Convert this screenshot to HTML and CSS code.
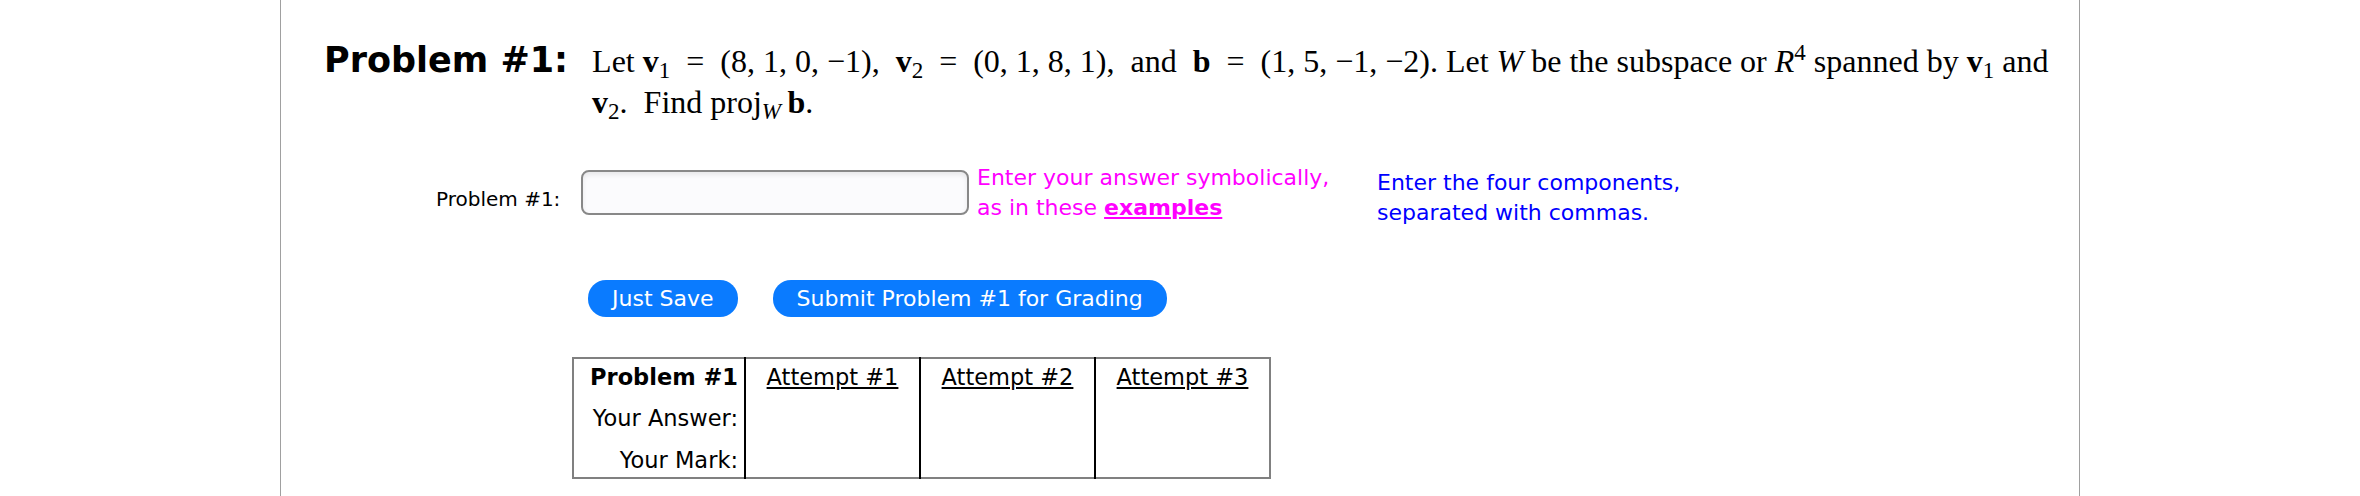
FILE: index.html
```html
<!DOCTYPE html>
<html lang="en">

<head>
  <meta charset="UTF-8" />
  <title>Problem #1</title>
  <link rel="stylesheet" href="styles.css">
</head>

<body>
  <div class="page">
    <div class="problem">
      <div class="problem-title">Problem #1:</div>
      <div class="problem-text">
        Let <b>v</b><span class="sub">1</span>&nbsp; = &nbsp;(8, 1, 0, −1), &nbsp;<b>v</b><span class="sub">2</span>&nbsp; = &nbsp;(0, 1, 8, 1), &nbsp;and &nbsp;<b>b</b>&nbsp; = &nbsp;(1, 5, −1, −2). Let <i>W</i> be the subspace or <i>R</i><span class="sup">4</span> spanned by <b>v</b><span class="sub">1</span> and<br>
        <b>v</b><span class="sub">2</span>. &nbsp;Find proj<span class="sub"><i>W</i></span>&thinsp;<b>b</b>.
      </div>
    </div>

    <div class="answer-row">
      <label class="answer-label" for="ans1">Problem #1:</label>
      <input class="answer-input" id="ans1" type="text">
      <div class="hint-pink">Enter your answer symbolically,<br>as in these <a href="#">examples</a></div>
      <div class="hint-blue">Enter the four components,<br>separated with commas.</div>
    </div>

    <div class="buttons">
      <button class="btn">Just Save</button>
      <button class="btn">Submit Problem #1 for Grading</button>
    </div>

    <table class="attempts">
      <tr class="head-row">
        <th class="row-head">Problem #1</th>
        <td class="attempt"><u>Attempt #1</u></td>
        <td class="attempt"><u>Attempt #2</u></td>
        <td class="attempt"><u>Attempt #3</u></td>
      </tr>
      <tr>
        <td class="row-head">Your Answer:</td>
        <td></td>
        <td></td>
        <td></td>
      </tr>
      <tr>
        <td class="row-head">Your Mark:</td>
        <td></td>
        <td></td>
        <td></td>
      </tr>
    </table>
  </div>
</body>

</html>
```

FILE: styles.css
```css
* {
  box-sizing: border-box;
}

body {
  margin: 0;
  background: white;
  font-family: 'DejaVu Sans', Verdana, sans-serif;
  color: black;
}

.page {
  width: 1800px;
  min-height: 496px;
  margin: 0 auto;
  border-left: 1px solid #a0a0a0;
  border-right: 1px solid #a0a0a0;
}

.problem {
  display: flex;
  align-items: flex-start;
  padding: 41px 0 0 43px;
}

.problem-title {
  font-size: 35px;
  font-weight: bold;
  line-height: 38px;
  margin-right: 24px;
  white-space: nowrap;
}

.problem-text {
  font-family: 'Liberation Serif', 'Times New Roman', serif;
  font-size: 32px;
  line-height: 41px;
  white-space: nowrap;
}

.sub {
  font-size: 0.72em;
  vertical-align: -0.28em;
  line-height: 0;
}

.sup {
  font-size: 0.72em;
  vertical-align: 0.5em;
  line-height: 0;
}

.answer-row {
  display: flex;
  align-items: flex-start;
  padding: 47px 0 0 155px;
}

.answer-label {
  font-size: 20px;
  margin-top: 17px;
  width: 145px;
}

.answer-input {
  width: 388px;
  height: 45px;
  border: 2px solid #888;
  border-radius: 8px;
  background: #fbfbfd;
  box-shadow: inset 0 3px 5px rgba(0, 0, 0, 0.08);
}

.hint-pink {
  color: #ff00ff;
  font-size: 22px;
  line-height: 30px;
  margin: -7px 0 0 8px;
  width: 400px;
}

.hint-pink a {
  color: #ff00ff;
  font-weight: bold;
}

.hint-blue {
  color: #0000ff;
  font-size: 22px;
  line-height: 30px;
  margin-top: -2px;
}

.buttons {
  display: flex;
  gap: 35px;
  padding: 52px 0 0 307px;
}

.btn {
  height: 37px;
  padding: 0 24px;
  border: none;
  border-radius: 18px;
  background: #0a7bff;
  color: white;
  font-family: 'DejaVu Sans', Verdana, sans-serif;
  font-size: 22px;
}

.attempts {
  margin: 40px 0 0 291px;
  border-collapse: collapse;
  border: 2px solid #808080;
  font-size: 22.5px;
  line-height: 28px;
}

.attempts td,
.attempts th {
  height: 42px;
  padding: 10px 6px 0;
  vertical-align: top;
  border-left: 2px solid black;
  width: 175px;
}

.attempts .head-row td,
.attempts .head-row th {
  height: 36px;
  padding-top: 4px;
}

.attempts .row-head {
  text-align: right;
  width: 172px;
  border-left: none;
  font-weight: normal;
}

.attempts th.row-head {
  font-weight: bold;
}

.attempt {
  text-align: center;
}
```
